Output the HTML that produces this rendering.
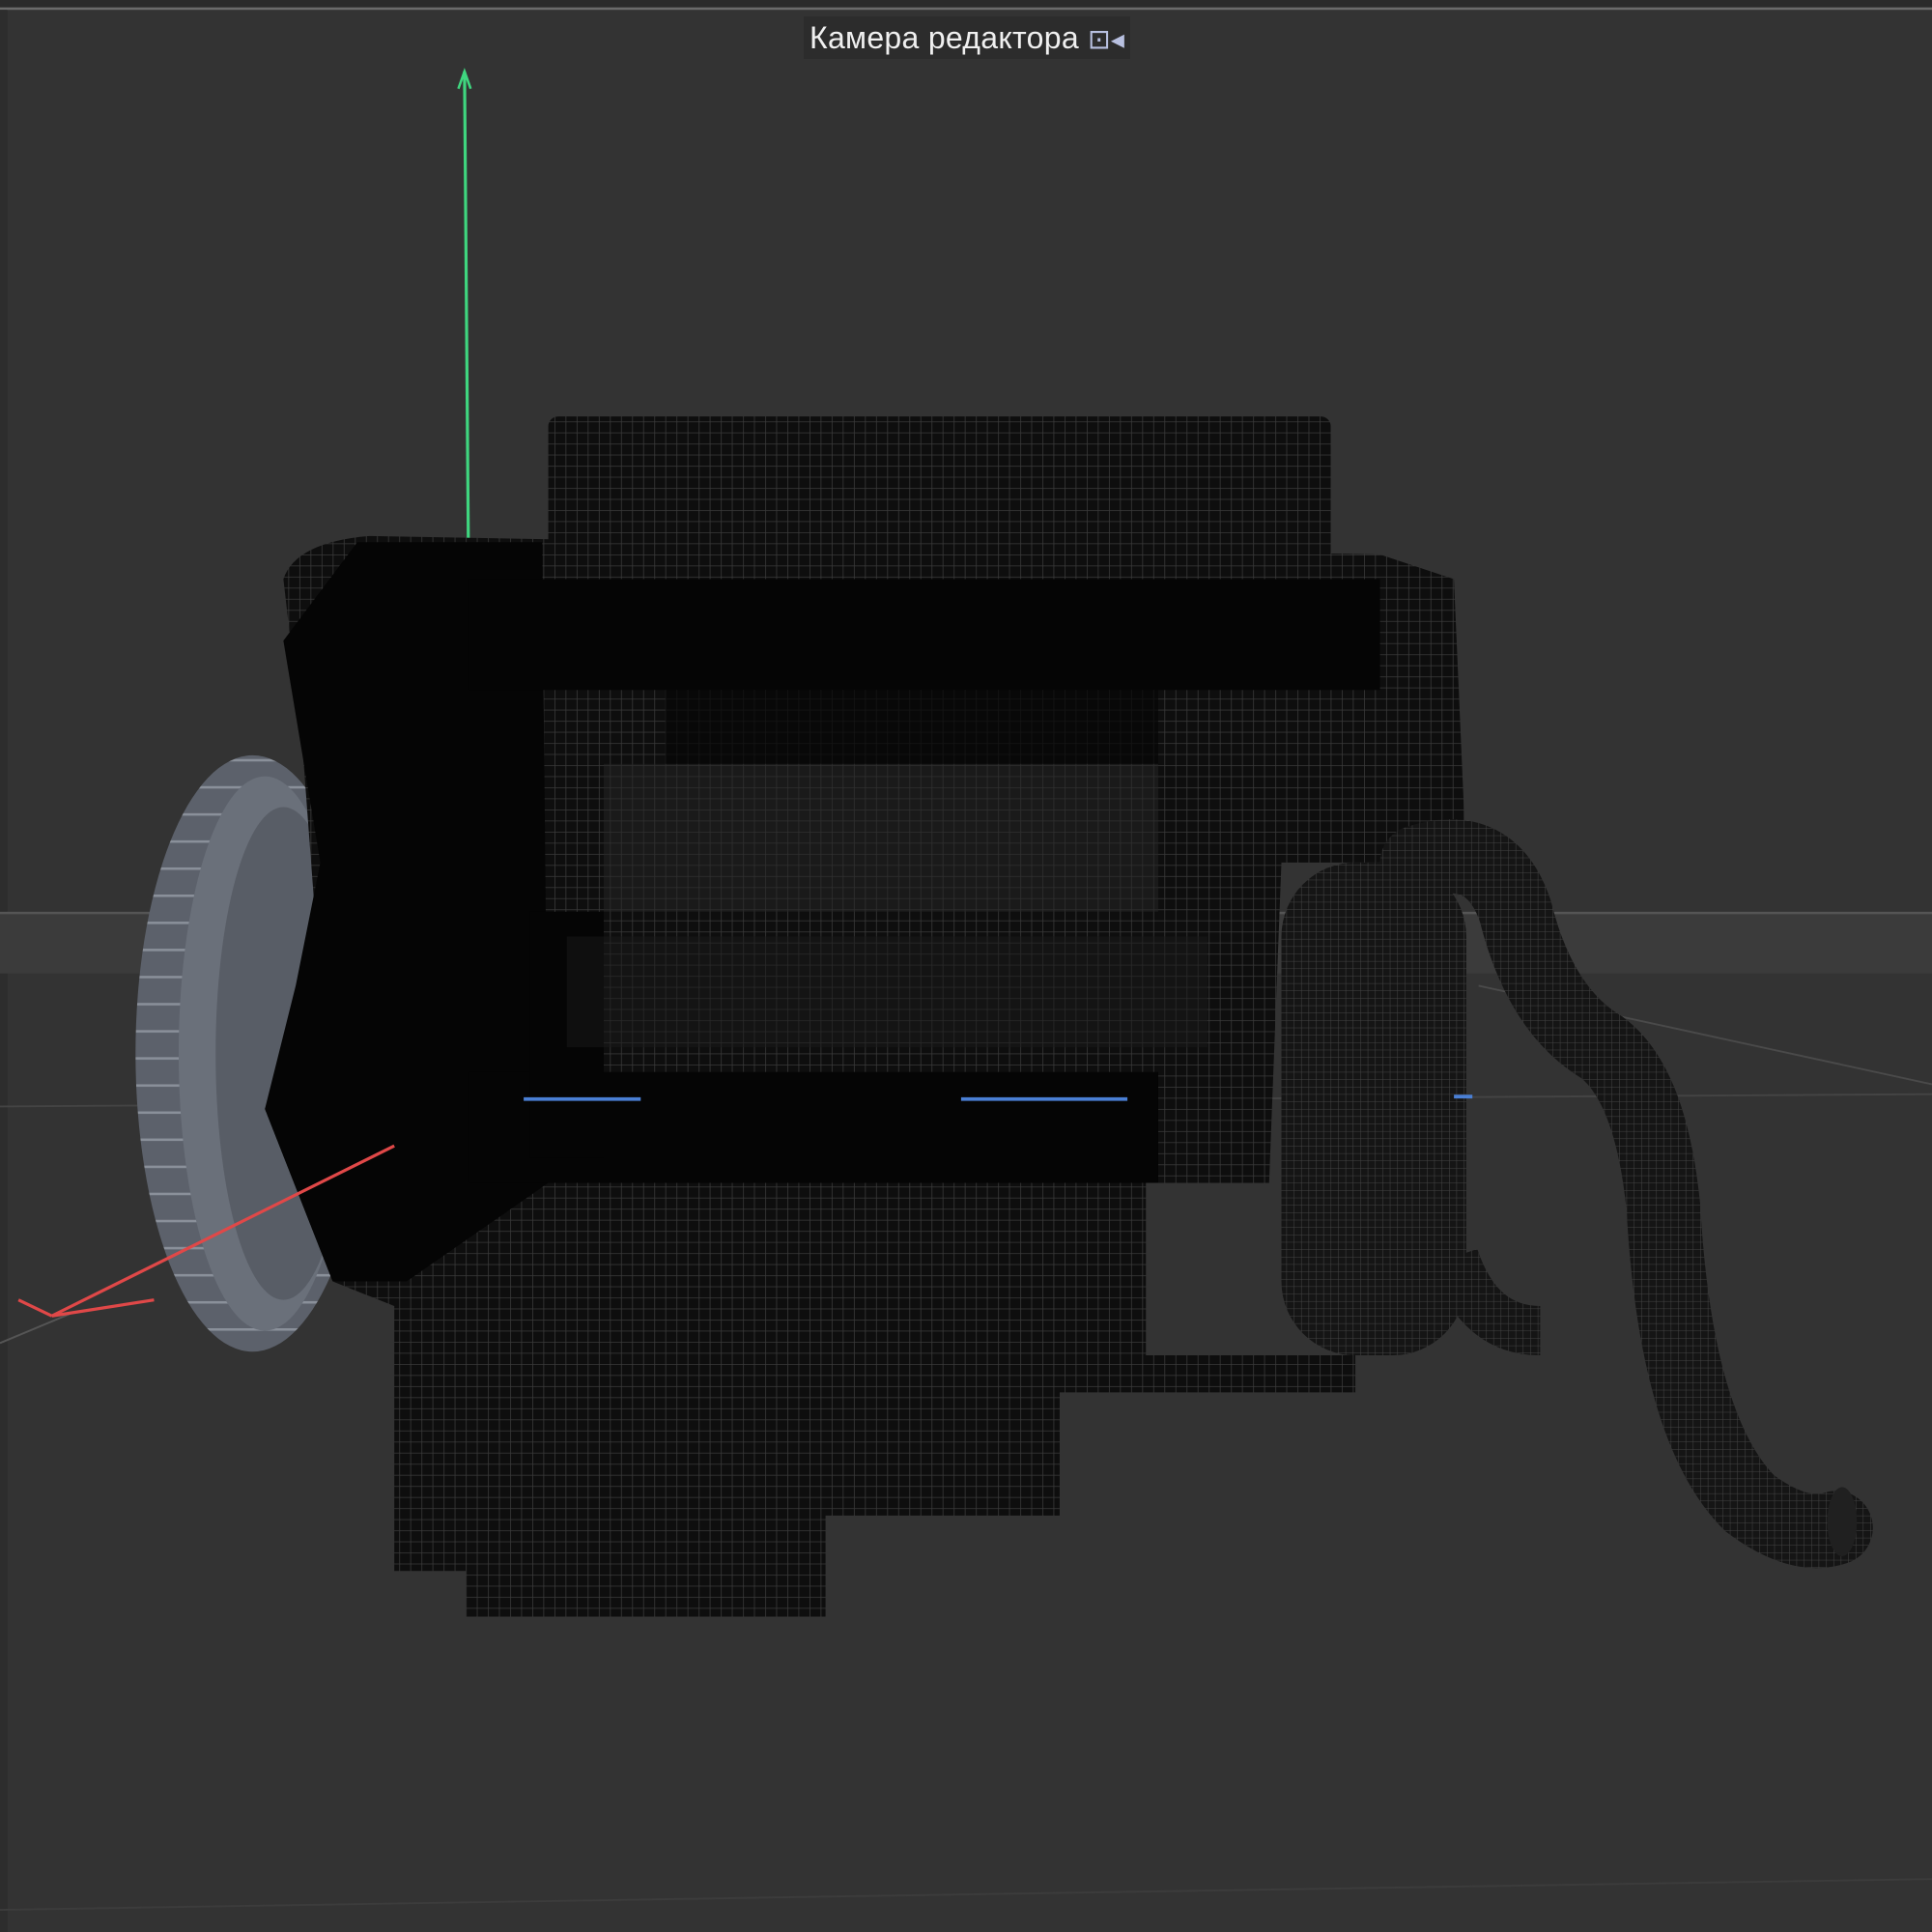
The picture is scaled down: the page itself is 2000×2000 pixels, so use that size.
<!DOCTYPE html>
<html><head><meta charset="utf-8"><style>
html,body{margin:0;padding:0;background:#333;}
#w{position:relative;width:2000px;height:2000px;overflow:hidden;background:#333;}
svg{position:absolute;left:0;top:0;}
.lbl{position:absolute;left:832px;top:17px;height:44px;padding:0 6px;font-family:"Liberation Sans","DejaVu Sans",sans-serif;font-size:32px;line-height:44px;color:#f0f0f0;background:#2c2c2c;letter-spacing:0.3px;}
</style></head><body><div id="w">
<svg width="2000" height="2000" viewBox="0 0 1568 1568">
<defs>
<pattern id="g" width="9" height="9" patternUnits="userSpaceOnUse">
<rect width="9" height="9" fill="#0e0e0e"/>
<path d="M0 0H9M0 0V9" stroke="#3a3a3a" stroke-width="1.2"/>
</pattern>
<pattern id="g2" width="6" height="6" patternUnits="userSpaceOnUse">
<rect width="6" height="6" fill="#151515"/>
<path d="M0 0H6M0 0V6" stroke="#444" stroke-width="0.8"/>
</pattern>
<pattern id="fan" width="8" height="22" patternUnits="userSpaceOnUse">
<rect width="8" height="22" fill="#5c616b"/>
<path d="M0 0H8" stroke="#8a909a" stroke-width="4"/>
</pattern>
</defs>
<rect width="1568" height="1568" fill="#333"/>
<rect x="0" y="0" width="1568" height="6" fill="#2a2a2a"/>
<rect x="0" y="6" width="1568" height="2" fill="#6a6a6a"/>
<rect x="0" y="8" width="6" height="1560" fill="#2d2d2d"/>
<!-- horizon / floor -->
<rect x="0" y="740" width="1568" height="50" fill="#3b3b3b"/>
<line x1="0" y1="741" x2="1568" y2="741" stroke="#555" stroke-width="2"/>
<line x1="0" y1="898" x2="1568" y2="888" stroke="#444" stroke-width="1.5"/>
<line x1="1200" y1="800" x2="1568" y2="880" stroke="#4a4a4a" stroke-width="1.5"/>
<line x1="0" y1="1090" x2="60" y2="1065" stroke="#555" stroke-width="1.5"/>
<line x1="0" y1="1550" x2="1568" y2="1525" stroke="#3c3c3c" stroke-width="1.5"/>
<!-- green axis -->
<line x1="377" y1="58" x2="383" y2="800" stroke="#3fd67f" stroke-width="2.5"/>
<path d="M372 72L377 58L382 72" stroke="#3fd67f" fill="none" stroke-width="2"/>
<!-- fan -->
<ellipse cx="205" cy="855" rx="95" ry="242" fill="url(#fan)"/>
<ellipse cx="215" cy="855" rx="70" ry="225" fill="#6a707a"/>
<ellipse cx="230" cy="855" rx="55" ry="200" fill="#4d5058" opacity="0.6"/>
<!-- engine body -->
<g fill="url(#g)">
<rect x="445" y="338" width="635" height="118" rx="8"/>
<path d="M230 470 Q240 440 300 435 L1120 450 L1180 470 L1190 700 L1040 700 L1030 960 L930 960 L930 1100 L1100 1100 L1100 1130 L860 1130 L860 1230 L670 1230 L670 1312 L378 1312 L378 1275 L320 1275 L320 1060 L270 1040 L215 900 L260 800 L245 600 Z"/>
</g>
<g fill="#050505">
<path d="M290 440 L440 440 L445 960 L330 1040 L270 1040 L215 900 L240 800 L260 700 L230 520 Z"/>
<rect x="380" y="470" width="740" height="90"/>
<rect x="380" y="870" width="560" height="90"/>
<rect x="430" y="740" width="60" height="200"/>
<rect x="540" y="560" width="400" height="60" opacity="0.7"/>
</g>
<rect x="1040" y="700" width="150" height="400" rx="60" fill="url(#g2)"/>
<rect x="460" y="760" width="520" height="90" fill="#1a1a1a" opacity="0.5"/>
<rect x="490" y="620" width="450" height="120" fill="#262626" opacity="0.5"/>
<!-- pipe -->
<path d="M1150 700 Q1210 680 1230 740 Q1250 820 1300 850 Q1340 880 1350 980 Q1360 1160 1420 1220 Q1460 1250 1490 1240" fill="none" stroke="url(#g2)" stroke-width="60" stroke-linecap="round"/>
<ellipse cx="1495" cy="1235" rx="12" ry="28" fill="#202020"/>
<path d="M1180 1020 Q1200 1080 1250 1080" fill="none" stroke="url(#g2)" stroke-width="40"/>
<!-- blue axis bits -->
<line x1="425" y1="892" x2="520" y2="892" stroke="#4a7fd4" stroke-width="3"/>
<line x1="780" y1="892" x2="915" y2="892" stroke="#4a7fd4" stroke-width="3"/>
<line x1="1180" y1="890" x2="1195" y2="890" stroke="#4a7fd4" stroke-width="3"/>
<!-- red axis -->
<line x1="320" y1="930" x2="42" y2="1068" stroke="#e04848" stroke-width="2.5"/>
<line x1="15" y1="1055" x2="42" y2="1068" stroke="#e04848" stroke-width="2.5"/>
<line x1="42" y1="1068" x2="125" y2="1055" stroke="#e04848" stroke-width="2.5"/>
</svg>
<div class="lbl">Камера редактора <span style="color:#b8c0e0;font-size:28px">⊡◂</span></div>
</div></body></html>
